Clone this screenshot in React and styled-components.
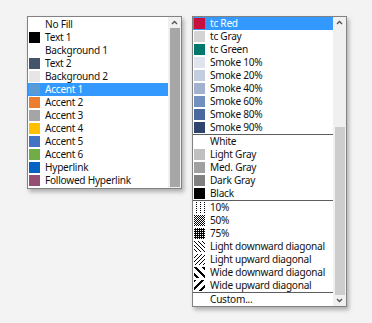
import React from "react";
import styled, { createGlobalStyle } from "styled-components";

const GlobalStyle = createGlobalStyle`
  body {
    margin: 0;
    background: #f3f3f3;
    font-family: "Noto Sans", "Open Sans", sans-serif;
  }
`;

const Page = styled.div`
  display: flex;
  align-items: flex-start;
  gap: 10px;
  padding: 16px 0 0 27px;
  height: 323px;
  box-sizing: border-box;
`;

const Dropdown = styled.div`
  display: flex;
  width: 155px;
  box-sizing: border-box;
  background: #fff;
  border: 1px solid #828282;
  box-shadow: 2px 3px 4px rgba(0, 0, 0, 0.28);
`;

const List = styled.ul`
  flex: 1;
  min-width: 0;
  margin: 0;
  padding: ${(p) => (p.$padded ? "1px 0" : "0")};
  list-style: none;
  overflow: hidden;
`;

const Row = styled.li`
  display: flex;
  align-items: center;
  gap: 5px;
  height: 13px;
  padding-left: 1px;
  background: ${(p) => (p.$selected ? "#3399ff" : "transparent")};
  color: ${(p) => (p.$selected ? "#fff" : "#111")};
  font-size: 10.1px;
  letter-spacing: -0.25px;
  line-height: 13px;
  white-space: nowrap;
`;

const Separator = styled.li`
  height: 1px;
  background: #5e5e5e;
`;

const Swatch = styled.span`
  flex: none;
  width: 11px;
  height: 11px;
  background: ${(p) => p.$color || "transparent"};
  display: block;
  line-height: 0;
`;

const ScrollBar = styled.div`
  flex: none;
  width: 13px;
  background: #f0f0f0;
  display: flex;
  flex-direction: column;
`;

const ArrowButton = styled.div`
  flex: none;
  height: 11px;
  display: flex;
  align-items: center;
  justify-content: center;
  margin-top: ${(p) => (p.$bottom ? "auto" : "0")};
`;

const Thumb = styled.div`
  flex: ${(p) => (p.$fill ? "1" : "none")};
  height: ${(p) => (p.$height ? p.$height + "px" : "auto")};
  margin: ${(p) => p.$top || 0}px 1px ${(p) => (p.$fill ? 1 : 0)}px 2px;
  background: ${(p) => (p.$active ? "#a6a6a6" : "#cdcdcd")};
`;

const Chevron = ({ down }) => (
  <svg width="7" height="5" viewBox="0 0 7 5">
    <polyline
      points={down ? "1,1 3.5,3.5 6,1" : "1,4 3.5,1.5 6,4"}
      fill="none"
      stroke="#505050"
      strokeWidth="1.3"
    />
  </svg>
);

// hatch fills, one cell map per pattern
const wide = (up) => {
  const cells = [];
  for (let y = 0; y < 8; y++) {
    for (let k = 0; k < 3; k++) {
      const x = up ? (7 - y + k + 8) % 8 : (y + k) % 8;
      cells.push([x, y]);
    }
  }
  return cells;
};

const patterns = {
  p10: { size: 4, cells: [[2, 0], [2, 2]] },
  p50: { size: 2, cells: [[0, 0], [1, 1]] },
  p75: { size: 2, cells: [[1, 0], [0, 1], [1, 1]] },
  lightDown: { size: 4, cells: [[0, 0], [1, 1], [2, 2], [3, 3]] },
  lightUp: { size: 4, cells: [[3, 0], [2, 1], [1, 2], [0, 3]] },
  wideDown: { size: 8, cells: wide(false) },
  wideUp: { size: 8, cells: wide(true) },
};

const Hatch = ({ name }) => {
  const { size, cells } = patterns[name];
  const id = "hatch-" + name;
  return (
    <svg width="11" height="11" shapeRendering="crispEdges">
      <defs>
        <pattern id={id} width={size} height={size} patternUnits="userSpaceOnUse">
          <rect width={size} height={size} fill="#fff" />
          {cells.map(([x, y], i) => (
            <rect key={i} x={x} y={y} width="1" height="1" fill="#000" />
          ))}
        </pattern>
      </defs>
      <rect width="11" height="11" fill={`url(#${id})`} />
    </svg>
  );
};

const themeColors = [
  { label: "No Fill" },
  { label: "Text 1", color: "#000000" },
  { label: "Background 1", color: "#ffffff" },
  { label: "Text 2", color: "#44546a" },
  { label: "Background 2", color: "#e7e6e6" },
  { label: "Accent 1", color: "#5b9bd5", selected: true },
  { label: "Accent 2", color: "#ed7d31" },
  { label: "Accent 3", color: "#a5a5a5" },
  { label: "Accent 4", color: "#ffc000" },
  { label: "Accent 5", color: "#4472c4" },
  { label: "Accent 6", color: "#70ad47" },
  { label: "Hyperlink", color: "#0563c1" },
  { label: "Followed Hyperlink", color: "#954f72" },
];

const fillGroups = [
  [
    { label: "tc Red", color: "#c8103e", selected: true },
    { label: "tc Gray", color: "#d4d4d4" },
    { label: "tc Green", color: "#00786b" },
    { label: "Smoke 10%", color: "#dfe4ee" },
    { label: "Smoke 20%", color: "#c3cde0" },
    { label: "Smoke 40%", color: "#a1b1cf" },
    { label: "Smoke 60%", color: "#7190c0" },
    { label: "Smoke 80%", color: "#4a6a9f" },
    { label: "Smoke 90%", color: "#2f456d" },
  ],
  [
    { label: "White", color: "#ffffff" },
    { label: "Light Gray", color: "#c0c0c0" },
    { label: "Med. Gray", color: "#a0a0a0" },
    { label: "Dark Gray", color: "#808080" },
    { label: "Black", color: "#000000" },
  ],
  [
    { label: "10%", hatch: "p10" },
    { label: "50%", hatch: "p50" },
    { label: "75%", hatch: "p75" },
    { label: "Light downward diagonal", hatch: "lightDown" },
    { label: "Light upward diagonal", hatch: "lightUp" },
    { label: "Wide downward diagonal", hatch: "wideDown" },
    { label: "Wide upward diagonal", hatch: "wideUp" },
  ],
  [{ label: "Custom..." }],
];

const Item = ({ item }) => (
  <Row $selected={item.selected}>
    <Swatch $color={item.color}>{item.hatch && <Hatch name={item.hatch} />}</Swatch>
    {item.label}
  </Row>
);

const App = () => {
  return (
    <Page>
      <GlobalStyle />
      <Dropdown>
        <List $padded>
          {themeColors.map((item) => (
            <Item key={item.label} item={item} />
          ))}
        </List>
        <ScrollBar>
          <ArrowButton>
            <Chevron />
          </ArrowButton>
          <Thumb $fill $active />
        </ScrollBar>
      </Dropdown>
      <Dropdown>
        <List>
          {fillGroups.map((group, g) => (
            <React.Fragment key={g}>
              {g > 0 && <Separator />}
              {group.map((item) => (
                <Item key={item.label} item={item} />
              ))}
            </React.Fragment>
          ))}
        </List>
        <ScrollBar>
          <ArrowButton>
            <Chevron />
          </ArrowButton>
          <Thumb $top={99} $height={168} />
          <ArrowButton $bottom>
            <Chevron down />
          </ArrowButton>
        </ScrollBar>
      </Dropdown>
    </Page>
  );
};

export default App;
